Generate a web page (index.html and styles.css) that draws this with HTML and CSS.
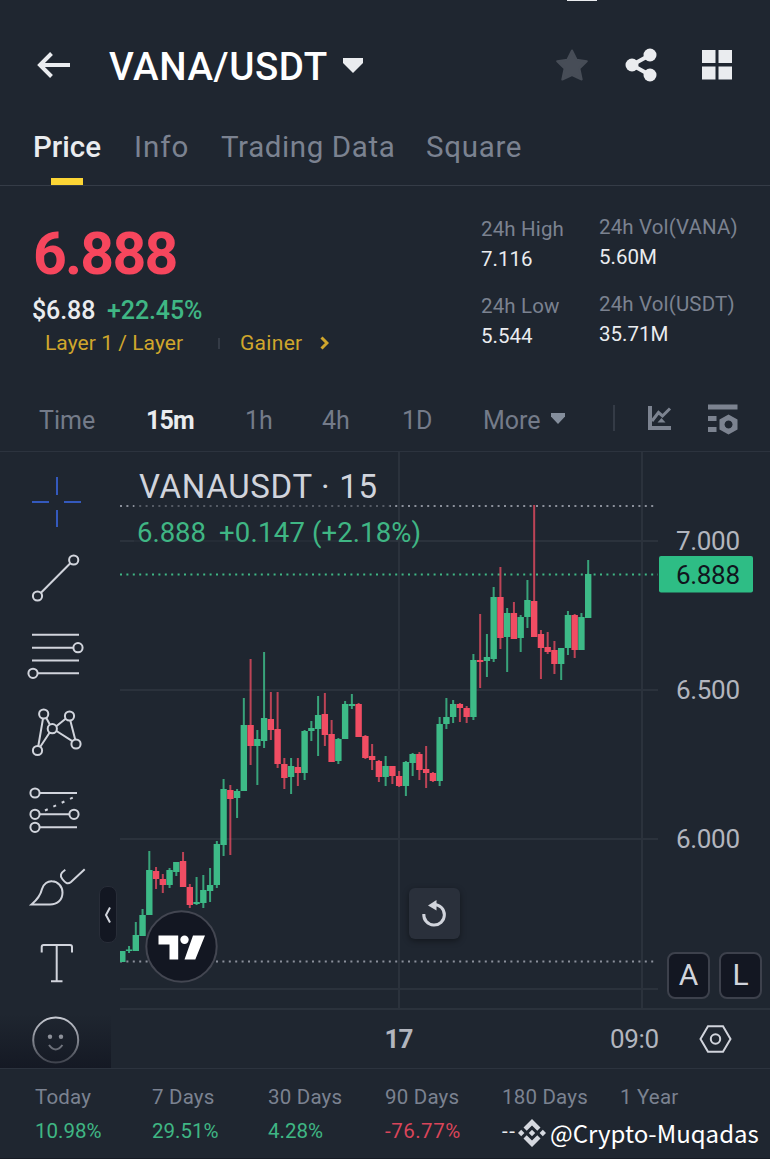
FILE: index.html
```html
<!DOCTYPE html>
<html lang="en">
<head>
    <meta charset="utf-8">
    <title>VANA/USDT</title>
    <link rel="stylesheet" href="styles.css">
</head>
<body>
    <div class="notch"></div>
    <header class="topbar">
        <svg class="back" width="34" height="26" viewBox="0 0 34 26"><path d="M33 13H4M14.500 1.500L3 13l11.500 11.500" fill="none" stroke="#eaecef" stroke-width="4"/></svg>
        <h1 class="pair">VANA/USDT</h1>
        <svg class="caret" width="20" height="15" viewBox="0 0 20 15"><path d="M0 0h20v5L10 15 0 5z" fill="#eaecef"/></svg>
        <div class="actions">
            <svg width="32" height="32" viewBox="0 0 32 32"><path d="M16 1.500l4.600 9.300 10.200 1.500-7.400 7.200 2.300 11-9.700-4.500-9.700 4.500 2.300-11L1.200 12.300l10.200-1.500z" fill="#474d57" stroke="#474d57" stroke-width="2" stroke-linejoin="round"/></svg>
            <svg width="32" height="34" viewBox="0 0 32 34"><path d="M25 7L7 17l18 10" fill="none" stroke="#eaecef" stroke-width="4"/><circle cx="25" cy="7" r="6.500" fill="#eaecef"/><circle cx="7" cy="17" r="6.500" fill="#eaecef"/><circle cx="25" cy="27" r="6.500" fill="#eaecef"/></svg>
            <svg width="30" height="30" viewBox="0 0 30 30"><path d="M0 0h13.500v13H0zM16.500 0H30v13H16.500zM0 16.500h13.500v13H0zM16.500 16.500H30v13H16.500z" fill="#eaecef"/></svg>
        </div>
    </header>

    <nav class="tabs">
        <a class="tab active">Price</a>
        <a class="tab info">Info</a>
        <a class="tab trading">Trading Data</a>
        <a class="tab square">Square</a>
    </nav>

    <section class="ticker">
        <div class="quote">
            <div class="last">6.888</div>
            <div class="fiat"><span class="usd">$6.88</span><span class="change">+22.45%</span></div>
            <div class="tags">
                <span class="tag-layer">Layer 1 / Layer</span>
                <i class="tag-sep"></i>
                <span class="tag-gainer">Gainer</span>
                <svg width="9" height="14" viewBox="0 0 9 14"><path d="M1.500 1.500L7 7l-5.500 5.500" fill="none" stroke="#d0a62c" stroke-width="3"/></svg>
            </div>
        </div>
        <div class="stats">
            <dl class="stat-col">
                <dt>24h High</dt><dd>7.116</dd>
                <dt>24h Low</dt><dd>5.544</dd>
            </dl>
            <dl class="stat-col volume">
                <dt>24h Vol(VANA)</dt><dd>5.60M</dd>
                <dt>24h Vol(USDT)</dt><dd>35.71M</dd>
            </dl>
        </div>
    </section>

    <nav class="intervals">
        <a>Time</a>
        <a class="selected">15m</a>
        <a>1h</a>
        <a>4h</a>
        <a>1D</a>
        <a>More</a>
        <svg class="more-caret" width="14" height="11" viewBox="0 0 14 11"><path d="M0 0h14v3.500L7 11 0 3.500z" fill="#848e9c"/></svg>
        <i class="divider"></i>
        <svg class="line-icon" width="24" height="24" viewBox="0 0 24 24"><path d="M2 0v22h21" fill="none" stroke="#7c8390" stroke-width="4"/><path d="M4 15l6.500-8.500 4 3.500L22 2.500" fill="none" stroke="#7c8390" stroke-width="3"/><path d="M13.500 12l4 4.500h-8z" fill="#7c8390"/></svg>
        <svg class="settings-icon" width="30" height="31" viewBox="0 0 30 31"><path d="M0 .5h29.500v5H0zM0 12h8.500v5H0zM0 23h8.500v5H0z" fill="#7c8390"/><path fill-rule="evenodd" d="M20.500 10.500l9 5v10l-9 5-9-5v-10zM20.500 16.500a4 4 0 1 0 .1 0z" fill="#7c8390"/></svg>
    </nav>

    <main class="chart">
        <div class="tools">
            <svg class="tool cross" viewBox="0 0 112 77"><path d="M57 13v18M57 46v17M32 38h17M64 38h17"/></svg>
            <svg class="tool" viewBox="0 0 112 77"><path d="M41 51.700L70.300 22.300"/><circle cx="73.700" cy="19" r="4.600"/><circle cx="37.500" cy="55" r="4.600"/></svg>
            <svg class="tool" viewBox="0 0 112 77"><path d="M32 16.700h47M32 29.700h41.500M32 42.500h47M38 55.300h41"/><circle cx="78" cy="29.700" r="4.600"/><circle cx="33" cy="55.300" r="4.600"/></svg>
            <svg class="tool" viewBox="0 0 112 77"><path d="M43 23.600L38.300 51M46.300 23l3.500 6.500M56.300 31.300l9.300-7.500M70.300 25.600L75.200 44.500M56.500 36l15.800 10.200M49.700 37.500L40.300 51.700"/><circle cx="43.700" cy="19" r="4.600"/><circle cx="69.500" cy="21" r="4.600"/><circle cx="52.300" cy="33.700" r="4.600"/><circle cx="37.500" cy="55.500" r="4.600"/><circle cx="76" cy="49" r="4.600"/></svg>
            <svg class="tool" viewBox="0 0 112 77"><path d="M39.600 21H77M39.600 42.300h29.800M39.600 55.300H77"/><path d="M45 38.500L74 25" stroke-dasharray="3 6.200"/><circle cx="35" cy="21" r="4.600"/><circle cx="35" cy="42.300" r="4.600"/><circle cx="74" cy="42.300" r="4.600"/><circle cx="35" cy="55.300" r="4.600"/></svg>
            <svg class="tool" viewBox="0 0 112 77"><path d="M31.500 55.500C38 50 41 44.500 42 40c1.500-5.500 6-8 10-7.700 6 .2 10.500 5.200 10.500 11.200 0 7.500-5 12-12.500 12z"/><path d="M65.300 20.700c-5 3.500-5.500 6-3 9.300 2.700 3.500 5 6 8.700 3L84.700 20.300"/></svg>
            <svg class="tool" viewBox="0 0 112 77"><path d="M41.700 26.500V21q0-2 2-2H70q2 0 2 2v5.500M56.700 19v36M51 55.300h11.500"/></svg>
            <svg class="tool" viewBox="0 0 112 77"><circle cx="55.700" cy="37" r="22.500"/><path d="M49 42q6.700 9 13.400 0"/><circle class="eye" cx="50" cy="33.700" r="2.200"/><circle class="eye" cx="61" cy="33.700" r="2.200"/></svg>
            <div class="tools-fade"></div>
        </div>

        <!-- plot, price scale and time scale share one coordinate system -->
        <svg class="plot" width="658" height="617" viewBox="112 452 658 617">
            <g class="grid">
                <path d="M120 541h538M120 690h538M120 839h538M120 989h538M399 452v557M642 452v557M120 1009h650"/>
            </g>
            <path class="range" d="M120 506h537M120 961.500h537"/>
            <rect class="legend-bg" x="134" y="466" width="256" height="86"/>
            <path class="last-line" d="M120 574.500h538"/>
            <g id="candles"></g>

            <text class="symbol" x="139" y="498" textLength="238">VANAUSDT · 15</text>
            <g class="legend">
                <text x="137" y="542" textLength="69">6.888</text>
                <text x="219" y="542" textLength="86">+0.147</text>
                <text x="312" y="542" textLength="109">(+2.18%)</text>
            </g>

            <g class="scale">
                <text x="676" y="550" textLength="64">7.000</text>
                <text x="676" y="699" textLength="64">6.500</text>
                <text x="676" y="848" textLength="64">6.000</text>
                <text class="day" x="384.500" y="1048" textLength="29">17</text>
                <text x="610" y="1048" textLength="49">09:0</text>
            </g>
            <rect x="659" y="556" width="94" height="36.500" rx="2" fill="#2ebd85"/>
            <text class="tag-price" x="676" y="584" textLength="64">6.888</text>
            <path class="gear" d="M700.500 1039l7.500-12.700h15l7.500 12.700-7.500 12.700h-15z"/>
            <circle class="gear" cx="715.500" cy="1039" r="4.700"/>
        </svg>

        <div class="collapse"><svg width="8" height="18" viewBox="0 0 8 18"><path d="M6 1.500L2 9l4 7.500" fill="none" stroke="#d1d4dc" stroke-width="2"/></svg></div>
        <svg class="tv" width="73" height="73" viewBox="144.500 909.500 73 73">
            <circle cx="181" cy="946" r="35.200" fill="#131722" stroke="#434651" stroke-width="2"/>
            <path d="M158 935h19.700v24H169v-15h-11zM192.500 935h12l-9.700 24H184z" fill="#fff"/>
            <circle cx="184" cy="939.300" r="4.200" fill="#fff"/>
        </svg>
        <div class="reset"><svg width="26" height="28" viewBox="0 0 26 28"><path d="M2.800 15A10.300 10.300 0 1 0 13 5.500" fill="none" stroke="#d1d4dc" stroke-width="3"/><path d="M7 6.500L15.500 1v10.500z" fill="#d1d4dc"/></svg></div>
        <div class="modes"><button>A</button><button>L</button></div>
    </main>

    <footer class="periods">
        <div><span>Today</span><b class="up">10.98%</b></div>
        <div><span>7 Days</span><b class="up">29.51%</b></div>
        <div><span>30 Days</span><b class="up">4.28%</b></div>
        <div><span>90 Days</span><b class="down">-76.77%</b></div>
        <div><span>180 Days</span><b class="empty">--</b></div>
        <div><span>1 Year</span></div>
        <div class="author">
            <svg width="28" height="28" viewBox="0 0 28 28" fill="#d5d8df"><path d="M14 0l8.500 8.500-3.200 3.200L14 6.400l-5.300 5.300-3.200-3.200zM14 28l8.500-8.500-3.200-3.200-5.300 5.300-5.300-5.300-3.200 3.200zM3.200 10.800L6.400 14l-3.200 3.200L0 14zM24.800 10.800L28 14l-3.200 3.200-3.200-3.200zM14 10.800l3.200 3.200-3.200 3.200-3.200-3.200z"/></svg>
            <span>@Crypto-Muqadas</span>
        </div>
    </footer>
    <script src="chart.js"></script>
</body>
</html>
```
FILE: styles.css
```css
* {
    box-sizing: border-box;
}
body {
    margin: 0;
    width: 770px;
    height: 1159px;
    overflow: hidden;
    position: relative;
    background: #1f2630;
    color: #eaecef;
    font-family: Roboto, "Liberation Sans", sans-serif;
}
svg {
    display: block;
    flex: none;
}
.notch {
    position: absolute;
    left: 567px;
    top: 0;
    width: 30px;
    height: 1px;
    background: #eaecef;
}

/* header */
.topbar {
    display: flex;
    align-items: center;
    height: 109px;
    padding: 21px 38px 0 37px;
}
.pair {
    margin: 3px 0 0 38px;
    width: 218px;
    font-size: 38.500px;
    font-weight: 500;
    letter-spacing: 0.6px;
    white-space: nowrap;
    color: #fff;
}
.caret {
    margin-left: 16px;
}
.actions {
    display: flex;
    align-items: center;
    margin-left: auto;
}
.actions svg + svg {
    margin-left: 37px;
}
.actions svg + svg + svg {
    margin-left: 45px;
}
.tabs {
    display: flex;
    gap: 33px;
    height: 77px;
    padding-left: 33px;
    border-bottom: 1px solid #353c47;
    font-size: 29.500px;
    line-height: 76px;
    color: #7b8290;
}
.tab {
    position: relative;
    white-space: nowrap;
}
.tab.active {
    width: 68px;
    color: #eaecef;
    font-weight: 500;
}
.tab.active::after {
    content: "";
    position: absolute;
    left: 18px;
    bottom: 0;
    width: 32px;
    height: 7px;
    background: #fcd535;
}
.info {
    width: 55px;
    letter-spacing: 1px;
}
.trading {
    width: 172px;
    margin-left: -1px;
    letter-spacing: 0.6px;
}
.square {
    letter-spacing: 0.7px;
}

/* price block */
.ticker {
    display: flex;
    height: 204px;
    padding-left: 33px;
}
.quote {
    width: 448px;
    padding-top: 35px;
}
.last {
    height: 66px;
    line-height: 65px;
    font-size: 59px;
    font-weight: 700;
    letter-spacing: -1.8px;
    color: #f6465d;
}
.fiat {
    display: flex;
    height: 46px;
    line-height: 47px;
    font-size: 25px;
    font-weight: 500;
    letter-spacing: -0.1px;
}
.usd {
    width: 74px;
    text-indent: -1px;
}
.change {
    color: #3fb684;
}
.tags {
    display: flex;
    align-items: center;
    height: 20px;
    padding-left: 12px;
    font-size: 21px;
    color: #d0a62c;
}
.tag-layer {
    width: 173px;
    letter-spacing: 0.05px;
}
.tag-sep {
    width: 2px;
    height: 11px;
    background: #343b46;
}
.tag-gainer {
    width: 80px;
    margin-left: 20px;
    letter-spacing: 0.3px;
}
.stats {
    display: flex;
    padding-top: 27px;
}
.stat-col {
    width: 118px;
    margin: 0;
    white-space: nowrap;
}
.stat-col.volume {
    width: 140px;
    margin-top: -2px;
}
dt {
    height: 30px;
    line-height: 32px;
    font-size: 20.500px;
    letter-spacing: 0.15px;
    color: #7b8290;
}
dd {
    height: 47px;
    margin: 0;
    line-height: 32px;
    font-size: 20.500px;
    color: #eaecef;
}

/* interval bar */
.intervals {
    display: grid;
    grid-template-columns: 107px 99px 77px 80px 81px 68px 62px 35px 60px 62px;
    align-items: center;
    height: 61px;
    padding-left: 39px;
    font-size: 25px;
    color: #747b89;
}
.intervals .selected {
    color: #eaecef;
    font-weight: 700;
    letter-spacing: -0.8px;
}
.more-caret {
    margin-top: -5px;
}
.divider {
    width: 2px;
    height: 26px;
    margin-top: -5px;
    background: #343b46;
}
.line-icon {
    margin-top: -5px;
}
.settings-icon {
    margin-top: -3px;
}

/* chart */
.chart {
    position: relative;
    display: flex;
    height: 618px;
    border-top: 1px solid #2c333e;
    border-bottom: 1px solid #2c333e;
    overflow: hidden;
}
.tools {
    position: relative;
    flex: none;
    width: 112px;
    height: 616px;
    padding-top: 12px;
    overflow: hidden;
}
.tool {
    width: 112px;
    height: 77px;
    fill: none;
    stroke: #d1d4dc;
    stroke-width: 2;
}
.tool.cross {
    stroke: #3459bd;
}
.tool .eye {
    fill: #d1d4dc;
    stroke: none;
}
.tools-fade {
    position: absolute;
    left: 0;
    bottom: 0;
    width: 111px;
    height: 54px;
    background: linear-gradient(rgba(19, 23, 34, 0), rgba(19, 23, 34, 0.85));
}
.grid {
    fill: none;
    stroke: #2b323c;
    stroke-width: 2;
}
.range,
.last-line {
    stroke: #8b909b;
    stroke-width: 2;
    stroke-dasharray: 2 4.400;
}
.last-line {
    stroke: #3fb684;
}
.legend-bg {
    fill: #1f2630;
    opacity: 0.5;
}
.symbol {
    fill: #d1d4dc;
    font-size: 33px;
}
.legend {
    fill: #3fb684;
    font-size: 27.500px;
}
.scale {
    fill: #b2b5be;
    font-size: 26px;
}
.day {
    font-weight: 700;
}
.tag-price {
    fill: #10151d;
    font-size: 26px;
}
.gear {
    fill: none;
    stroke: #d1d4dc;
    stroke-width: 2;
}
.up-candle {
    fill: #3dba87;
}
.down-candle {
    fill: #f14d63;
}
.up-candle .wick {
    opacity: 0.85;
}
.down-candle .wick {
    opacity: 0.75;
}
.collapse {
    position: absolute;
    left: 99px;
    top: 434px;
    display: flex;
    align-items: center;
    justify-content: center;
    width: 18px;
    height: 57px;
    border: 1px solid #282d38;
    border-radius: 8px;
    background: #131722;
}
.tv {
    position: absolute;
    left: 144.500px;
    top: 457.500px;
}
.reset {
    position: absolute;
    left: 409px;
    top: 436px;
    display: flex;
    align-items: center;
    justify-content: center;
    width: 51px;
    height: 51px;
    border-radius: 6px;
    background: #2a303b;
    box-shadow: 0 2px 6px rgba(0, 0, 0, 0.4);
}
.reset svg {
    margin: -1px 2px 0 0;
}
.modes {
    position: absolute;
    left: 667px;
    top: 500px;
    display: flex;
    gap: 9px;
}
.modes button {
    width: 43px;
    height: 47px;
    padding: 0 0 2px;
    border: 2px solid #3d414c;
    border-radius: 8px;
    background: #131722;
    color: #d1d4dc;
    font-family: inherit;
    font-size: 30px;
}

/* performance by period */
.periods {
    position: relative;
    display: grid;
    grid-template-columns: 117px 116px 117px 117px 118px 110px;
    height: 90px;
    padding: 11px 0 0 35px;
    border-bottom: 1px solid #171c25;
    font-size: 20.500px;
    line-height: 34px;
    white-space: nowrap;
}
.periods div span,
.periods div b {
    display: block;
    font-weight: 400;
}
.periods div > span {
    letter-spacing: 0.2px;
    color: #7b8290;
}
.periods .up {
    color: #3fb684;
}
.periods .down {
    color: #d9455a;
    letter-spacing: 0.5px;
}
.periods .empty {
    letter-spacing: 1.5px;
}
.periods .author {
    position: absolute;
    left: 518px;
    top: 47px;
    display: flex;
    align-items: center;
    gap: 4px;
}
.periods .author span {
    color: #fff;
    font-family: "Noto Sans CJK SC", "Noto Sans", sans-serif;
    font-size: 24px;
    font-weight: 400;
    letter-spacing: 0;
}
```
FILE: chart.js
```js
// up?, high, low, body top, body bottom
const candles = [
    [1, 951, 962, 951, 962],
    [1, 946, 953, 949.5, 951],
    [1, 922, 951, 935, 951],
    [1, 909, 936, 915, 936],
    [1, 851, 915, 870, 915],
    [0, 867, 889, 871, 879],
    [0, 874, 893, 879, 885],
    [1, 868, 888, 870, 885],
    [1, 862, 876, 862, 872],
    [0, 852, 887, 861, 887],
    [0, 884, 908, 887, 905],
    [1, 877, 905, 902, 904],
    [1, 875, 908, 890, 903],
    [1, 868, 902, 885, 891],
    [1, 841, 888, 844, 885],
    [1, 779, 856, 789, 845],
    [0, 785, 855, 790, 799],
    [1, 789, 818, 791, 798],
    [1, 698, 791, 725, 791],
    [0, 659, 765, 725, 746],
    [1, 730, 785, 739, 746],
    [1, 652, 748, 718, 741],
    [0, 692, 740, 719, 730],
    [0, 692, 768, 729, 764],
    [0, 758, 789, 764, 778],
    [1, 758, 794, 766, 777],
    [0, 758, 786, 767, 773],
    [1, 730, 780, 731, 773],
    [1, 721, 741, 728, 731],
    [1, 696, 756, 715, 729],
    [0, 693, 746, 714, 735],
    [0, 720, 762, 734, 762],
    [1, 738, 764, 739, 761],
    [1, 701, 739, 704, 739],
    [1, 694, 709, 704, 706],
    [0, 703, 737, 704, 737],
    [0, 735, 759, 736, 758],
    [0, 744, 770, 756, 760],
    [0, 760, 782, 761, 777],
    [1, 756, 786, 766, 777],
    [0, 766, 784, 766, 776],
    [0, 771, 787, 776, 786],
    [1, 761, 796, 762, 786],
    [1, 753, 776, 754, 763],
    [0, 752, 780, 754, 770],
    [0, 746, 788, 769, 773],
    [0, 772, 782, 773, 781],
    [1, 717, 786, 724, 781],
    [1, 698, 729, 717, 724],
    [1, 700, 723, 704, 717],
    [0, 703, 722, 704, 708],
    [0, 706, 723, 708, 717],
    [1, 654, 720, 660, 717],
    [0, 614, 688, 660, 662],
    [1, 634, 677, 657, 661],
    [1, 587, 662, 597, 659],
    [0, 567, 649, 597, 638],
    [1, 608, 672, 613, 637],
    [0, 602, 639, 613, 639],
    [1, 615, 652, 617, 638],
    [1, 580, 628, 600, 617],
    [0, 505, 637, 601, 637],
    [0, 630, 679, 634, 648],
    [0, 632, 654, 647, 652],
    [0, 641, 674, 650, 664],
    [1, 648, 680, 648, 664],
    [1, 611, 655, 615, 648],
    [0, 614, 658, 615, 650],
    [1, 613, 650, 617, 650],
    [1, 560, 618, 574, 618]
];

const FIRST_X = 122.3;
const STEP = 6.752;

document.getElementById('candles').innerHTML = candles.map(([up, high, low, top, bottom], i) => {
    const x = FIRST_X + i * STEP;
    // the first bar is cut by the left edge of the plot
    const left = Math.max(120, x - 3.2);
    const width = x + 3.2 - left;
    return `<g class="${up ? 'up' : 'down'}-candle">` +
        `<rect class="wick" x="${x - 1}" y="${high}" width="2" height="${low - high}"/>` +
        `<rect x="${left}" y="${top}" width="${width}" height="${bottom - top}"/></g>`;
}).join('');
```
